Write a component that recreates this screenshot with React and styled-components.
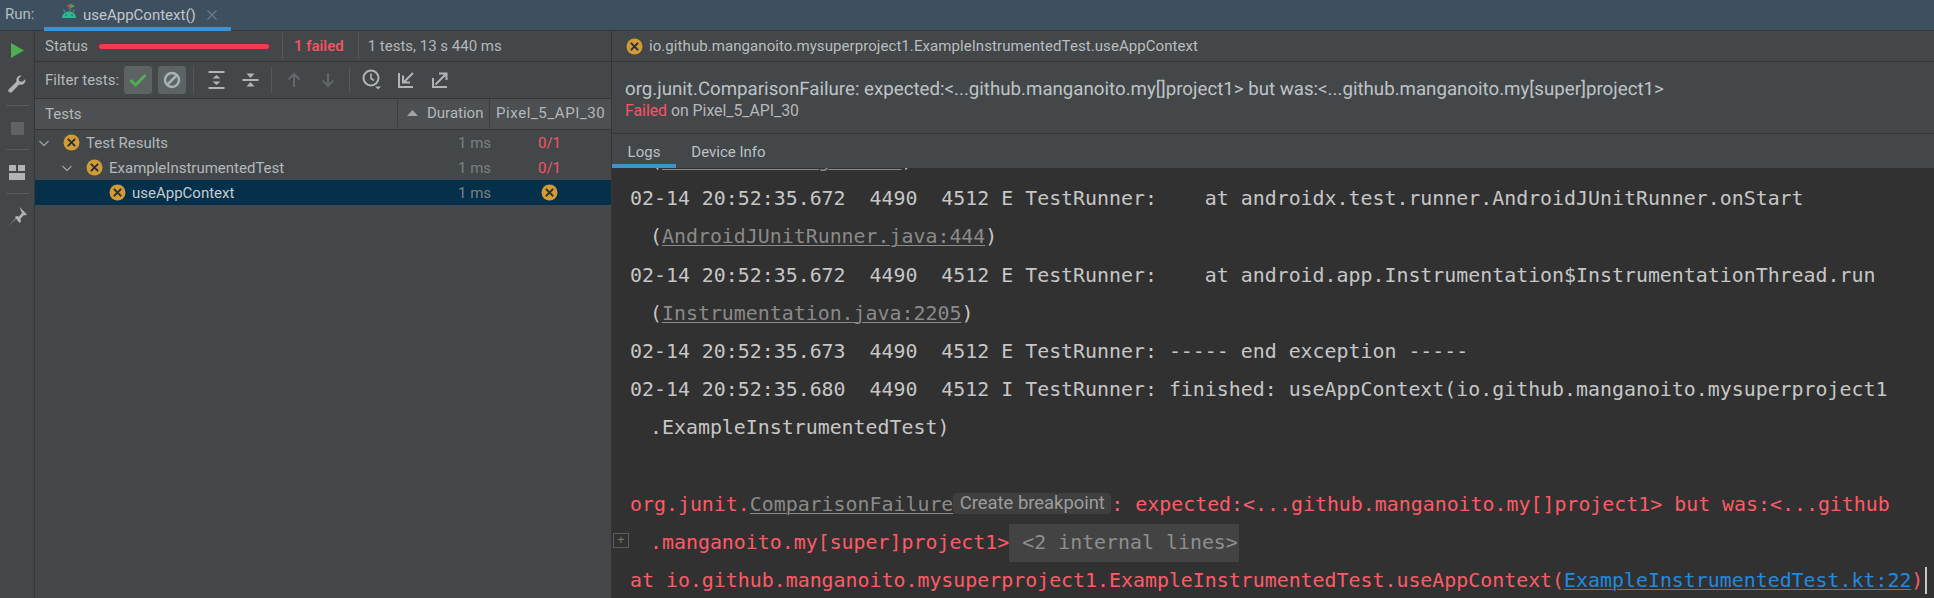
import { createGlobalStyle, styled } from 'styled-components'

const GlobalStyle = createGlobalStyle`
  html, body {
    margin: 0;
    padding: 0;
    height: 100%;
    background: #313131;
    overflow: hidden;
  }
  #root {
    height: 100%;
  }
`

const Page = styled.div`
  width: 1934px;
  height: 598px;
  display: flex;
  flex-direction: column;
  font-family: Roboto, "Noto Sans", sans-serif;
  font-size: 15px;
  color: #b4b8ba;
  background: #43474a;
  overflow: hidden;
`

const RunBar = styled.div`
  height: 30px;
  flex: none;
  display: flex;
  background: #3e5060;
  border-bottom: 1px solid #33373a;
`

const RunLabel = styled.div`
  width: 44px;
  padding-left: 5px;
  box-sizing: border-box;
  line-height: 28px;
  color: #b4bbc0;
`

const RunTab = styled.div`
  width: 187px;
  height: 31px;
  box-sizing: border-box;
  display: flex;
  align-items: flex-start;
  padding: 3px 0 0 17px;
  border-bottom: 4px solid #3d93d0;
  color: #c0c6ca;
  gap: 6px;
  span {
    line-height: 24px;
  }
`

const TabClose = styled.svg`
  margin: 7px 0 0 5px;
`

const Body = styled.div`
  flex: 1;
  display: flex;
  min-height: 0;
`

const Sidebar = styled.div`
  width: 35px;
  box-sizing: border-box;
  flex: none;
  border-right: 1px solid #33373a;
  display: flex;
  flex-direction: column;
  align-items: center;
  padding-top: 3px;
`

const SideButton = styled.div`
  width: 34px;
  height: 33px;
  flex: none;
  display: flex;
  align-items: center;
  justify-content: center;
`

const SideRule = styled.div`
  width: 23px;
  height: 1px;
  flex: none;
  background: #565a5d;
  margin: ${p => p.$margin || '4px 0'};
`

const TestsPanel = styled.div`
  width: 577px;
  box-sizing: border-box;
  flex: none;
  display: flex;
  flex-direction: column;
  border-right: 1px solid #33373a;
`

const StatusRow = styled.div`
  height: 30px;
  flex: none;
  display: flex;
  align-items: center;
  padding-left: 10px;
  border-bottom: 1px solid #33373a;
`

const StatusBar = styled.div`
  width: 170px;
  height: 5px;
  border-radius: 3px;
  background: #f53b4f;
  margin: 0 2px 0 11px;
`

const VRule = styled.div`
  width: 1px;
  height: ${p => p.$height || 26}px;
  background: #55595c;
  margin: ${p => p.$margin || '0 11px'};
`

const FailedCount = styled.div`
  color: #f75464;
  font-weight: 500;
`

const FilterRow = styled.div`
  height: 36px;
  flex: none;
  display: flex;
  align-items: center;
  padding-left: 10px;
  border-bottom: 1px solid #33373a;
`

const FilterLabel = styled.div`
  width: 79px;
`

const Toggle = styled.div`
  width: 28px;
  height: 28px;
  border-radius: 3px;
  background: #5d6265;
  margin-right: 6px;
  display: flex;
  align-items: center;
  justify-content: center;
`

const ToolIcon = styled.div`
  width: 34px;
  height: 28px;
  display: flex;
  align-items: center;
  justify-content: center;
`

const HeaderRow = styled.div`
  height: 30px;
  flex: none;
  display: grid;
  grid-template-columns: 362px 92px 1fr;
  background: #4c5052;
  border-bottom: 1px solid #33373a;
`

const HeaderCell = styled.div`
  display: flex;
  align-items: center;
  gap: 9px;
  padding-left: ${p => p.$pad || 6}px;
  line-height: 30px;
  white-space: nowrap;
  letter-spacing: ${p => p.$spacing || 0}px;
  & + & {
    border-left: 1px solid #3c3f41;
    height: 28px;
  }
`

const TreeRow = styled.div`
  height: 25px;
  display: grid;
  grid-template-columns: 423px 40px 1fr;
  align-items: center;
  background: ${p => (p.$selected ? '#05304a' : 'transparent')};
  color: ${p => (p.$selected ? '#c4cbd0' : 'inherit')};
`

const TreeName = styled.div`
  display: flex;
  align-items: center;
  padding-left: ${p => p.$indent}px;
  gap: 6px;
  white-space: nowrap;
`

const Chevron = styled.svg`
  width: 12px;
  margin-right: 7px;
`

const TreeTime = styled.div`
  color: #7c8083;
  white-space: nowrap;
`

const TreeResult = styled.div`
  display: flex;
  justify-content: center;
  color: #f75464;
  padding-right: 10px;
`

const DetailPanel = styled.div`
  flex: 1;
  min-width: 0;
  display: flex;
  flex-direction: column;
`

const DetailTitle = styled.div`
  height: 30px;
  flex: none;
  display: flex;
  align-items: center;
  gap: 6px;
  padding-left: 14px;
  border-bottom: 1px solid #33373a;
  font-size: 15px;
  letter-spacing: 0.07px;
  color: #b9bdbf;
`

const MessageBox = styled.div`
  height: 72px;
  flex: none;
  box-sizing: border-box;
  padding: 15px 0 0 13px;
  border-bottom: 1px solid #33373a;
`

const MessageText = styled.div`
  font-size: 18.7px;
  text-rendering: geometricPrecision;
  line-height: 24px;
  color: #bfc3c5;
  white-space: nowrap;
`

const MessageSub = styled.div`
  font-size: 15.8px;
  line-height: 20px;
  color: #b4b8ba;
  span {
    color: #f75464;
  }
`

const DetailTabs = styled.div`
  height: 34px;
  flex: none;
  display: flex;
`

const DetailTab = styled.div`
  width: ${p => p.$width}px;
  box-sizing: border-box;
  line-height: 37px;
  text-align: center;
  height: 34px;
  border-bottom: ${p => (p.$active ? '4px solid #3d93d0' : 'none')};
  color: #bcc0c2;
`

const LogPane = styled.div`
  flex: 1;
  min-height: 0;
  overflow: hidden;
  background: #313131;
  padding-left: 18px;
  position: relative;
  font-family: "DejaVu Sans Mono", "Liberation Mono", monospace;
  font-size: 19.9px;
  color: #c6c6c6;
`

const LogInner = styled.div`
  margin-top: -26px;
`

const LogLine = styled.div`
  height: 38.2px;
  line-height: 38.2px;
  white-space: pre;
  padding-left: ${p => (p.$wrapped ? 20 : 0)}px;
  color: ${p => (p.$error ? '#ff5a67' : 'inherit')};
`

const ClassLink = styled.span`
  color: #8a8a8a;
  text-decoration: underline;
  text-underline-offset: 2px;
  text-decoration-thickness: 1px;
`

const FileLink = styled.span`
  color: #1f8ae0;
  text-decoration: underline;
  text-underline-offset: 2px;
  text-decoration-thickness: 1px;
`

const BreakpointHint = styled.span`
  display: inline-block;
  width: 158px;
  height: 21px;
  line-height: 20px;
  background: #3f3f3f;
  border-radius: 4px;
  font-family: Roboto, sans-serif;
  font-size: 18.4px;
  color: #9d9d9d;
  text-align: center;
  vertical-align: 2px;
`

const FoldedLines = styled.span`
  display: inline-block;
  height: 38px;
  padding: 0 1px 0 13px;
  background: #434343;
  color: #8e8e8e;
`

const FoldBox = styled.div`
  position: absolute;
  left: 1px;
  top: 365px;
  width: 14px;
  height: 13px;
  border: 1px solid #5c5c5c;
  color: #777;
  font: 13px/13px "Liberation Mono", monospace;
  text-align: center;
`

const Caret = styled.span`
  display: inline-block;
  width: 2px;
  height: 27px;
  background: #c8c8c8;
  margin-left: 2px;
  vertical-align: -7px;
`

const FailIcon = () => (
  <svg width="17" height="17" viewBox="0 0 17 17">
    <circle cx="8.5" cy="8.5" r="8" fill="#d19b35" />
    <path d="M5.4 5.4l6.2 6.2M11.6 5.4l-6.2 6.2" stroke="#2b2f33" strokeWidth="2" strokeLinecap="round" />
  </svg>
)

const AndroidIcon = () => (
  <svg width="16" height="16" viewBox="0 0 16 16">
    <path d="M1 15c0-4 3-6.500 7-6.500s7 2.500 7 6.500z" fill="#2fb58f" />
    <path d="M4 9L2.500 6.500M12 9l1.500-2.500" stroke="#2fb58f" strokeWidth="1" />
    <circle cx="5" cy="12" r="0.8" fill="#3e5060" />
    <circle cx="11" cy="12" r="0.8" fill="#3e5060" />
    <path d="M9 1v7" stroke="#8a7a60" strokeWidth="1" />
    <path d="M9 1L5.500 3 9 5z" fill="#c0523f" />
    <path d="M9.500 0.500L14 3 9.500 5.500z" fill="#5d9e50" />
  </svg>
)

const TreeChevron = () => (
  <Chevron height="12" viewBox="0 0 12 12">
    <path d="M1.500 4l4.500 4.500L10.500 4" fill="none" stroke="#9a9ea1" strokeWidth="1.300" />
  </Chevron>
)

const TOOL_COLOR = '#b0b4b6'
const TOOL_DIM = '#63676a'

const ExpandIcon = () => (
  <svg width="17" height="18" viewBox="0 0 17 18" fill={TOOL_COLOR}>
    <rect x="0.500" y="0" width="16" height="2" />
    <rect x="0.500" y="16" width="16" height="2" />
    <path d="M8.500 4l4 3.500h-8zM8.500 14l4-3.500h-8z" />
  </svg>
)

const CollapseIcon = () => (
  <svg width="17" height="18" viewBox="0 0 17 18" fill={TOOL_COLOR}>
    <rect x="0.500" y="8" width="16" height="2" />
    <path d="M8.500 7l4-4.500h-8zM8.500 11l4 4.500h-8z" />
  </svg>
)

const ArrowIcon = ({ down }) => (
  <svg width="14" height="16" viewBox="0 0 14 16" fill="none" stroke={TOOL_DIM} strokeWidth="2" style={down ? { transform: 'rotate(180deg)' } : undefined}>
    <path d="M7 15V2M1.500 7.500L7 2l5.500 5.500" />
  </svg>
)

const ClockIcon = () => (
  <svg width="20" height="22" viewBox="0 0 20 22" fill="none" stroke={TOOL_COLOR} strokeWidth="2">
    <circle cx="9" cy="9" r="7.500" />
    <path d="M9 4.500V9.500l3 2" strokeWidth="1.600" />
    <path d="M13 17.500h6l-3 3z" fill={TOOL_COLOR} stroke="none" />
  </svg>
)

const ImportIcon = () => (
  <svg width="16" height="16" viewBox="0 0 16 16" fill="none" stroke={TOOL_COLOR} strokeWidth="2">
    <path d="M1 1v14h14" />
    <path d="M15 1L6 10M5 3.500V10.500h7" strokeWidth="2" />
  </svg>
)

const ExportIcon = () => (
  <svg width="16" height="16" viewBox="0 0 16 16" fill="none" stroke={TOOL_COLOR} strokeWidth="2">
    <path d="M1 6v9h14" />
    <path d="M3.500 12.500L14 2M7 1.500h7.500V8" />
  </svg>
)

const logLines = [
  { text: '(DefaultRunning.kt:12)', link: true, wrapped: true },
  { text: '02-14 20:52:35.672  4490  4512 E TestRunner:    at androidx.test.runner.AndroidJUnitRunner.onStart' },
  { text: '(AndroidJUnitRunner.java:444)', link: true, wrapped: true },
  { text: '02-14 20:52:35.672  4490  4512 E TestRunner:    at android.app.Instrumentation$InstrumentationThread.run' },
  { text: '(Instrumentation.java:2205)', link: true, wrapped: true },
  { text: '02-14 20:52:35.673  4490  4512 E TestRunner: ----- end exception -----' },
  { text: '02-14 20:52:35.680  4490  4512 I TestRunner: finished: useAppContext(io.github.manganoito.mysuperproject1' },
  { text: '.ExampleInstrumentedTest)', wrapped: true },
  { text: ' ' }
]

export default function App () {
  return (
    <Page>
      <GlobalStyle />
      <RunBar>
        <RunLabel>Run:</RunLabel>
        <RunTab>
          <AndroidIcon />
          <span>useAppContext()</span>
          <TabClose width="10" height="10" viewBox="0 0 10 10">
            <path d="M0.500 0.500l9 9M9.500 0.500l-9 9" stroke="#6f7b85" strokeWidth="1.200" />
          </TabClose>
        </RunTab>
      </RunBar>
      <Body>
        <Sidebar>
          <SideButton>
            <svg width="13" height="15" viewBox="0 0 13 15"><path d="M0 0l13 7.500L0 15z" fill="#4caf50" /></svg>
          </SideButton>
          <SideButton>
            <svg width="18" height="18" viewBox="0 0 18 18">
              <path d="M17.500 4.300a4.800 4.800 0 0 1-6.300 5.200L4 17a2 2 0 0 1-3-3l7.500-7.200A4.800 4.800 0 0 1 13.700.500l-3 3 .5 2.800 2.800.5z" fill="#b0b4b6" />
            </svg>
          </SideButton>
          <SideRule $margin="5px 0 6px" />
          <SideButton>
            <svg width="13" height="13"><rect width="13" height="13" fill="#5f6366" /></svg>
          </SideButton>
          <SideRule $margin="4px 0 6px" />
          <SideButton>
            <svg width="16" height="15" viewBox="0 0 16 15" fill="#b0b4b6">
              <rect width="7" height="6" />
              <rect x="9" width="7" height="6" />
              <rect y="8" width="16" height="7" />
            </svg>
          </SideButton>
          <SideRule $margin="4px 0 6px" />
          <SideButton>
            <svg width="19" height="19" viewBox="0 0 19 19" fill="#b0b4b6">
              <path d="M11.500 0L19 7.500l-2 1-1-.5-3.500 3.500.5 3-1.500 1.500L7 10.500 8 9l3 .5L14 6l-.5-1zM7.500 11.500l-7 7.500 7.500-7z" />
            </svg>
          </SideButton>
        </Sidebar>
        <TestsPanel>
          <StatusRow>
            Status
            <StatusBar />
            <VRule />
            <FailedCount>1 failed</FailedCount>
            <VRule $margin="0 9px 0 14px" />
            1 tests, 13 s 440 ms
          </StatusRow>
          <FilterRow>
            <FilterLabel>Filter tests:</FilterLabel>
            <Toggle>
              <svg width="18" height="14" viewBox="0 0 18 14"><path d="M1.500 7l5 5L16.500 2" fill="none" stroke="#4caf50" strokeWidth="3" /></svg>
            </Toggle>
            <Toggle>
              <svg width="18" height="18" viewBox="0 0 18 18" fill="none" stroke="#a6b2b8" strokeWidth="2.500">
                <circle cx="9" cy="9" r="7" />
                <path d="M4 14L14 4" />
              </svg>
            </Toggle>
            <VRule $margin="0 5px 0 1px" />
            <ToolIcon><ExpandIcon /></ToolIcon>
            <ToolIcon><CollapseIcon /></ToolIcon>
            <VRule $margin="0 5px 0 4px" />
            <ToolIcon><ArrowIcon /></ToolIcon>
            <ToolIcon><ArrowIcon down /></ToolIcon>
            <VRule $margin="0 5px 0 4px" />
            <ToolIcon><ClockIcon /></ToolIcon>
            <ToolIcon><ImportIcon /></ToolIcon>
            <ToolIcon><ExportIcon /></ToolIcon>
          </FilterRow>
          <HeaderRow>
            <HeaderCell $pad={10}>Tests</HeaderCell>
            <HeaderCell $pad={9}>
              <svg width="11" height="6" viewBox="0 0 11 6"><path d="M5.500 0L11 6H0z" fill="#a0a4a6" /></svg>
              Duration
            </HeaderCell>
            <HeaderCell $spacing={0.6}>Pixel_5_API_30</HeaderCell>
          </HeaderRow>
          <TreeRow>
            <TreeName $indent={3}><TreeChevron /><FailIcon />Test Results</TreeName>
            <TreeTime>1 ms</TreeTime>
            <TreeResult>0/1</TreeResult>
          </TreeRow>
          <TreeRow>
            <TreeName $indent={26}><TreeChevron /><FailIcon />ExampleInstrumentedTest</TreeName>
            <TreeTime>1 ms</TreeTime>
            <TreeResult>0/1</TreeResult>
          </TreeRow>
          <TreeRow $selected>
            <TreeName $indent={74}><FailIcon />useAppContext</TreeName>
            <TreeTime>1 ms</TreeTime>
            <TreeResult><FailIcon /></TreeResult>
          </TreeRow>
        </TestsPanel>
        <DetailPanel>
          <DetailTitle>
            <FailIcon />
            io.github.manganoito.mysuperproject1.ExampleInstrumentedTest.useAppContext
          </DetailTitle>
          <MessageBox>
            <MessageText>org.junit.ComparisonFailure: expected:&lt;...github.manganoito.my[]project1&gt; but was:&lt;...github.manganoito.my[super]project1&gt;</MessageText>
            <MessageSub><span>Failed</span> on Pixel_5_API_30</MessageSub>
          </MessageBox>
          <DetailTabs>
            <DetailTab $width={64} $active>Logs</DetailTab>
            <DetailTab $width={105}>Device Info</DetailTab>
          </DetailTabs>
          <LogPane>
            <FoldBox>+</FoldBox>
            <LogInner>
              {logLines.map((line, i) => (
                <LogLine key={i} $wrapped={line.wrapped}>
                  {line.link ? (
                    <>(<ClassLink>{line.text.slice(1, -1)}</ClassLink>)</>
                  ) : line.text}
                </LogLine>
              ))}
              <LogLine $error>
                org.junit.<ClassLink>ComparisonFailure</ClassLink><BreakpointHint>Create breakpoint</BreakpointHint>: expected:&lt;...github.manganoito.my[]project1&gt; but was:&lt;...github
              </LogLine>
              <LogLine $error $wrapped>
                .manganoito.my[super]project1&gt;<FoldedLines>&lt;2 internal lines&gt;</FoldedLines>
              </LogLine>
              <LogLine $error>
                at io.github.manganoito.mysuperproject1.ExampleInstrumentedTest.useAppContext(<FileLink>ExampleInstrumentedTest.kt:22</FileLink>)<Caret />
              </LogLine>
            </LogInner>
          </LogPane>
        </DetailPanel>
      </Body>
    </Page>
  )
}
